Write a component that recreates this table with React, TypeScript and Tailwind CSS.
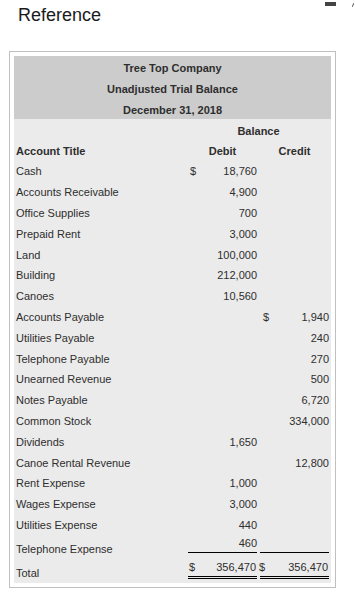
import React from 'react'

type Line = {
  label: string
  dS?: boolean
  d?: string
  cS?: boolean
  c?: string
}

const rows: Line[] = [
  { label: 'Cash', dS: true, d: '18,760' },
  { label: 'Accounts Receivable', d: '4,900' },
  { label: 'Office Supplies', d: '700' },
  { label: 'Prepaid Rent', d: '3,000' },
  { label: 'Land', d: '100,000' },
  { label: 'Building', d: '212,000' },
  { label: 'Canoes', d: '10,560' },
  { label: 'Accounts Payable', cS: true, c: '1,940' },
  { label: 'Utilities Payable', c: '240' },
  { label: 'Telephone Payable', c: '270' },
  { label: 'Unearned Revenue', c: '500' },
  { label: 'Notes Payable', c: '6,720' },
  { label: 'Common Stock', c: '334,000' },
  { label: 'Dividends', d: '1,650' },
  { label: 'Canoe Rental Revenue', c: '12,800' },
  { label: 'Rent Expense', d: '1,000' },
  { label: 'Wages Expense', d: '3,000' },
  { label: 'Utilities Expense', d: '440' },
]

// label | debit | credit, 3px gutters, ends 2px short of the panel edge
const grid = 'grid grid-cols-[171px_69px_69px] gap-x-[3px] pr-[2px]'

export default function App() {
  return (
    <div className="min-h-[605px] w-[355px] bg-white text-[#2e2e2e]" style={{ fontFamily: '"Liberation Sans", Arial, sans-serif' }}>
      {/* title bar */}
      <div className="flex items-start">
        <div className="pl-[18px] pt-[5px] text-[18px] leading-[21px] text-[#1a1a1a]">Reference</div>
        <div className="ml-auto mt-[2px] h-[4px] w-[11px] bg-[#444]" />
        <svg className="ml-[16px] mr-[1px] mt-[3px]" width="2" height="4" viewBox="0 0 2 4">
          <path d="M0 4 L2 0" stroke="#555" strokeWidth="1" />
        </svg>
      </div>

      <div className="ml-[9px] mt-[25px] w-[327px] border border-[#c0c0c0] p-[4px] text-[11px]">
        {/* heading */}
        <div className="h-[63px] bg-[#cccccc] pt-[2px] text-center font-bold leading-[21px]">
          <div>Tree Top Company</div>
          <div>Unadjusted Trial Balance</div>
          <div>December 31, 2018</div>
        </div>

        <div className="bg-[#ebebeb] pb-[1px]">
          <div className={`${grid} h-[21.7px] pt-[3px] font-bold leading-[18.7px]`}>
            <div />
            <div className="col-span-2 text-center">Balance</div>
          </div>
          <div className={`${grid} h-[20.8px] font-bold leading-[20.8px]`}>
            <div className="pl-[2px]">Account Title</div>
            <div className="text-center">Debit</div>
            <div className="text-center">Credit</div>
          </div>

          {rows.map((r) => (
            <div key={r.label} className={`${grid} h-[20.8px] leading-[20.8px]`}>
              <div className="pl-[2px]">{r.label}</div>
              <div className="flex justify-between">
                <span className="pl-[2px]">{r.dS ? '$' : ''}</span>
                <span>{r.d}</span>
              </div>
              <div className="flex justify-between">
                <span className="pl-[3px]">{r.cS ? '$' : ''}</span>
                <span>{r.c}</span>
              </div>
            </div>
          ))}

          <div className={`${grid} h-[18px] items-start`}>
            <div className="pl-[2px] pt-[3px] leading-[20.8px]">Telephone Expense</div>
            <div className="h-[17.5px] border-b border-black text-right leading-[14px]">460</div>
            <div className="h-[17.5px] border-b border-black" />
          </div>

          <div className={`${grid} h-[28.5px] items-start`}>
            <div className="pl-[2px] pt-[9px] leading-[20.8px]">Total</div>
            <div className="flex justify-between border-b-[3px] border-double border-black pr-[1px] pt-[4.5px] leading-[18px]">
              <span className="pl-[1px]">$</span>
              <span>356,470</span>
            </div>
            <div className="flex justify-between border-b-[3px] border-double border-black pr-[1px] pt-[4.5px] leading-[18px]">
              <span className="-ml-[1px]">$</span>
              <span>356,470</span>
            </div>
          </div>
        </div>
      </div>
    </div>
  )
}
